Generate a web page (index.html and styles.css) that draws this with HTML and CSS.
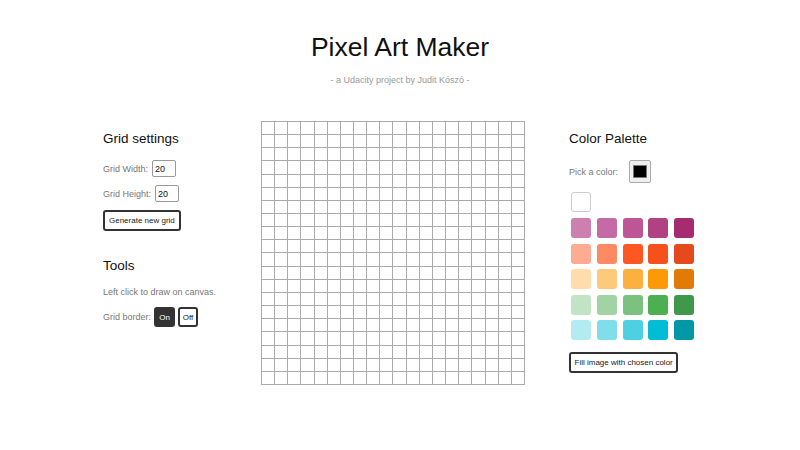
FILE: index.html
```html
<!DOCTYPE html>
<html lang="en">
<head>
    <meta charset="UTF-8">
    <meta name="viewport" content="width=device-width, initial-scale=1.0">
    <title>Pixel Art Maker</title>
    <link rel="stylesheet" href="styles.css">
</head>
<body>
    <header class="page-header">
        <h1 class="title">Pixel Art Maker</h1>
        <p class="subtitle">- a Udacity project by Judit Kószó -</p>
    </header>

    <main class="layout">
        <section class="panel">
            <h2 class="panel-title">Grid settings</h2>
            <form id="sizePicker">
                <label class="field">Grid Width: <input type="number" id="inputWidth" class="num-input" value="20" min="1" max="50"></label>
                <label class="field field-next">Grid Height: <input type="number" id="inputHeight" class="num-input" value="20" min="1" max="50"></label>
                <button type="submit" class="btn btn-generate">Generate new grid</button>
            </form>

            <h2 class="panel-title tools-title">Tools</h2>
            <p class="hint">Left click to draw on canvas.</p>
            <div class="toggle-row">
                <span>Grid border:</span>
                <button type="button" class="btn btn-toggle active" id="borderOn">On</button>
                <button type="button" class="btn btn-toggle" id="borderOff">Off</button>
            </div>
        </section>

        <section class="canvas-wrap">
            <div id="pixelCanvas" class="canvas"></div>
        </section>

        <section class="panel panel-right">
            <h2 class="panel-title">Color Palette</h2>
            <div class="pick-row">
                <span>Pick a color:</span>
                <input type="color" id="colorPicker" class="color-input" value="#000000">
            </div>
            <div class="swatch swatch-white"></div>
            <div class="palette" id="palette"></div>
            <button type="button" class="btn btn-fill" id="fillBtn">Fill image with chosen color</button>
        </section>
    </main>

    <script>
        var colors = [
            '#cd7fb0', '#c66aa5', '#bd5596', '#b04182', '#a62c70',
            '#fdab91', '#fd8a65', '#ff5722', '#f4511e', '#e44a1d',
            '#fedcab', '#fdc97a', '#fbb040', '#fb9a06', '#e07b08',
            '#c2e4c5', '#a2d3a4', '#7bc17f', '#4caf50', '#40984a',
            '#b2ebf2', '#80deea', '#4dd0e1', '#00bcd4', '#0097a7'
        ];

        // palette swatches
        var palette = document.getElementById('palette');
        colors.forEach(function(c) {
            var s = document.createElement('div');
            s.className = 'swatch';
            s.style.backgroundColor = c;
            palette.appendChild(s);
        });

        // build the drawing grid
        function makeGrid(w, h) {
            var canvas = document.getElementById('pixelCanvas');
            canvas.innerHTML = '';
            canvas.style.gridTemplateColumns = 'repeat(' + w + ', 1fr)';
            canvas.style.gridTemplateRows = 'repeat(' + h + ', 1fr)';
            for (var i = 0; i < w * h; i++) {
                var cell = document.createElement('div');
                cell.className = 'cell';
                canvas.appendChild(cell);
            }
        }

        makeGrid(20, 20);

        document.getElementById('sizePicker').addEventListener('submit', function(event) {
            event.preventDefault();
            makeGrid(document.getElementById('inputWidth').value, document.getElementById('inputHeight').value);
        });
    </script>
</body>
</html>
```

FILE: styles.css
```css
body {
    margin: 0;
    font-family: "Liberation Sans", Arial, sans-serif;
    color: #111;
    background-color: #fff;
}

.page-header {
    text-align: center;
    padding-top: 32px;
}

.title {
    margin: 0;
    font-size: 26.5px;
    line-height: 30px;
    font-weight: normal;
}

.subtitle {
    margin: 13px 0 0;
    font-size: 9px;
    line-height: 11px;
    color: #999;
}

.layout {
    display: grid;
    grid-template-columns: 158px 264px 1fr;
    width: 594px;
    margin: 35px auto 0;
}

.panel-right {
    padding-left: 44px;
}

.panel-title {
    margin: 10px 0 0;
    font-size: 13.5px;
    line-height: 16px;
    font-weight: normal;
    color: #111;
}

.tools-title {
    margin-top: 27px;
}

.field {
    display: flex;
    align-items: center;
    gap: 4px;
    margin-top: 13px;
    font-size: 9px;
    color: #777;
}

.field-next {
    margin-top: 8px;
}

.num-input {
    width: 24px;
    height: 17px;
    box-sizing: border-box;
    padding: 0 2px;
    border: 1px solid #999;
    border-radius: 2px;
    font-family: inherit;
    font-size: 9px;
    color: #111;
    -moz-appearance: textfield;
}

.num-input::-webkit-inner-spin-button,
.num-input::-webkit-outer-spin-button {
    -webkit-appearance: none;
    margin: 0;
}

.btn {
    display: block;
    height: 21px;
    box-sizing: border-box;
    background-color: #fff;
    border: 2px solid #333;
    border-radius: 3px;
    font-family: inherit;
    font-size: 8px;
    color: #222;
    cursor: pointer;
}

.btn-generate {
    margin-top: 8px;
    padding: 0 4px;
}

.hint {
    margin: 12.5px 0 0;
    font-size: 9px;
    line-height: 11px;
    color: #777;
}

.toggle-row {
    display: flex;
    align-items: center;
    gap: 3px;
    margin-top: 9.5px;
    font-size: 9px;
    color: #777;
}

.btn-toggle {
    height: 20px;
    width: 21px;
    padding: 0;
}

.btn-toggle + .btn-toggle {
    width: 20px;
}

.btn-toggle.active {
    background-color: #333;
    color: #fff;
}

.canvas {
    display: grid;
    width: 264px;
    height: 264px;
    box-sizing: border-box;
    border-top: 1px solid #aaa;
    border-left: 1px solid #aaa;
}

.cell {
    border-right: 1px solid #aaa;
    border-bottom: 1px solid #aaa;
}

.pick-row {
    display: flex;
    align-items: center;
    gap: 11px;
    margin-top: 13px;
    font-size: 9px;
    color: #777;
}

.color-input {
    width: 22px;
    height: 23px;
    box-sizing: border-box;
    padding: 0;
    border: 1px solid #aaa;
    border-radius: 2px;
    background-color: #efefef;
    cursor: pointer;
}

.color-input::-webkit-color-swatch-wrapper {
    padding: 4px 3px;
}

.color-input::-webkit-color-swatch {
    border: 1px solid #777;
    border-radius: 0;
}

.swatch {
    width: 20px;
    height: 20px;
    box-sizing: border-box;
    border-radius: 3px;
}

.swatch-white {
    margin: 9px 0 0 2px;
    border: 1px solid #ccc;
    background-color: #fff;
}

.palette {
    display: grid;
    grid-template-columns: repeat(5, 20px);
    column-gap: 5.75px;
    row-gap: 5.5px;
    margin: 6px 0 0 2px;
}

.btn-fill {
    margin-top: 12px;
    padding: 0 3.5px;
}
```
